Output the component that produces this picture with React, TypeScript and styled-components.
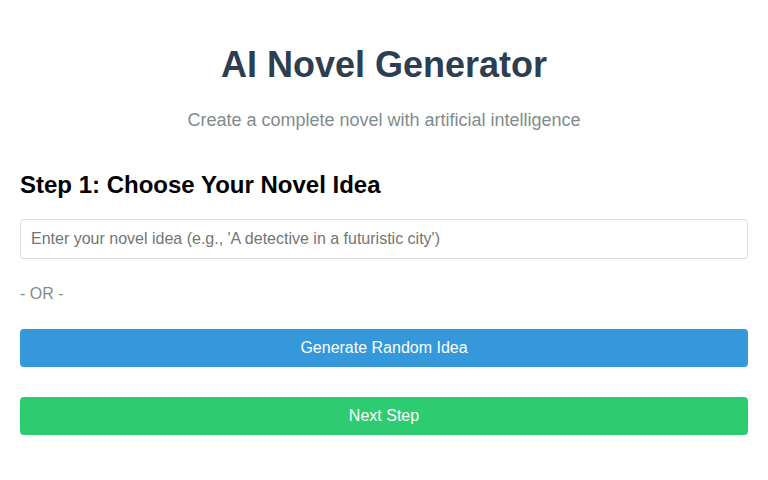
import React, { useState } from "react"
import styled, { createGlobalStyle } from "styled-components"

const GlobalStyle = createGlobalStyle`
  body {
    margin: 0;
    background: #ffffff;
    font-family: "Liberation Sans", Arial, sans-serif;
  }
`

const Container = styled.div`
  max-width: 800px;
  margin: 0 auto;
  padding: 20px;
  box-sizing: border-box;
`

const Header = styled.header`
  text-align: center;
  margin-bottom: 40px;
`

const Title = styled.h1`
  font-size: 36px;
  font-weight: bold;
  color: #2c3e50;
  margin: 24px 0 24px;
`

const Subtitle = styled.p`
  font-size: 18px;
  color: #7f8c8d;
  margin: 0;
`

const StepTitle = styled.h2`
  font-size: 24px;
  font-weight: bold;
  color: #000000;
  margin: 0 0 20px;
`

const IdeaInput = styled.input`
  display: block;
  width: 100%;
  box-sizing: border-box;
  height: 40px;
  padding: 10px;
  border: 1px solid #dddddd;
  border-radius: 4px;
  font-family: "Liberation Sans", Arial, sans-serif;
  font-size: 16px;
  color: #333333;
  outline: none;

  &::placeholder {
    color: #757575;
  }
`

const Divider = styled.p`
  font-size: 16px;
  color: #7f8c8d;
  margin: 26px 0 26px;
`

const ActionButton = styled.button<{ $variant: "primary" | "success" }>`
  display: block;
  width: 100%;
  height: 38px;
  padding: 10px;
  border: none;
  border-radius: 4px;
  background: ${(p) => (p.$variant === "primary" ? "#3498db" : "#2ecc71")};
  color: #ffffff;
  font-family: "Liberation Sans", Arial, sans-serif;
  font-size: 16px;
  cursor: pointer;
  margin-bottom: 30px;
`

export default function App() {
  const [idea, setIdea] = useState("")
  return (
    <Container>
      <GlobalStyle />
      <Header>
        <Title>AI Novel Generator</Title>
        <Subtitle>Create a complete novel with artificial intelligence</Subtitle>
      </Header>
      <section>
        <StepTitle>Step 1: Choose Your Novel Idea</StepTitle>
        <IdeaInput
          value={idea}
          onChange={(e) => setIdea(e.target.value)}
          placeholder="Enter your novel idea (e.g., 'A detective in a futuristic city')"
        />
        <Divider>- OR -</Divider>
        <ActionButton $variant="primary">Generate Random Idea</ActionButton>
        <ActionButton $variant="success">Next Step</ActionButton>
      </section>
    </Container>
  )
}
